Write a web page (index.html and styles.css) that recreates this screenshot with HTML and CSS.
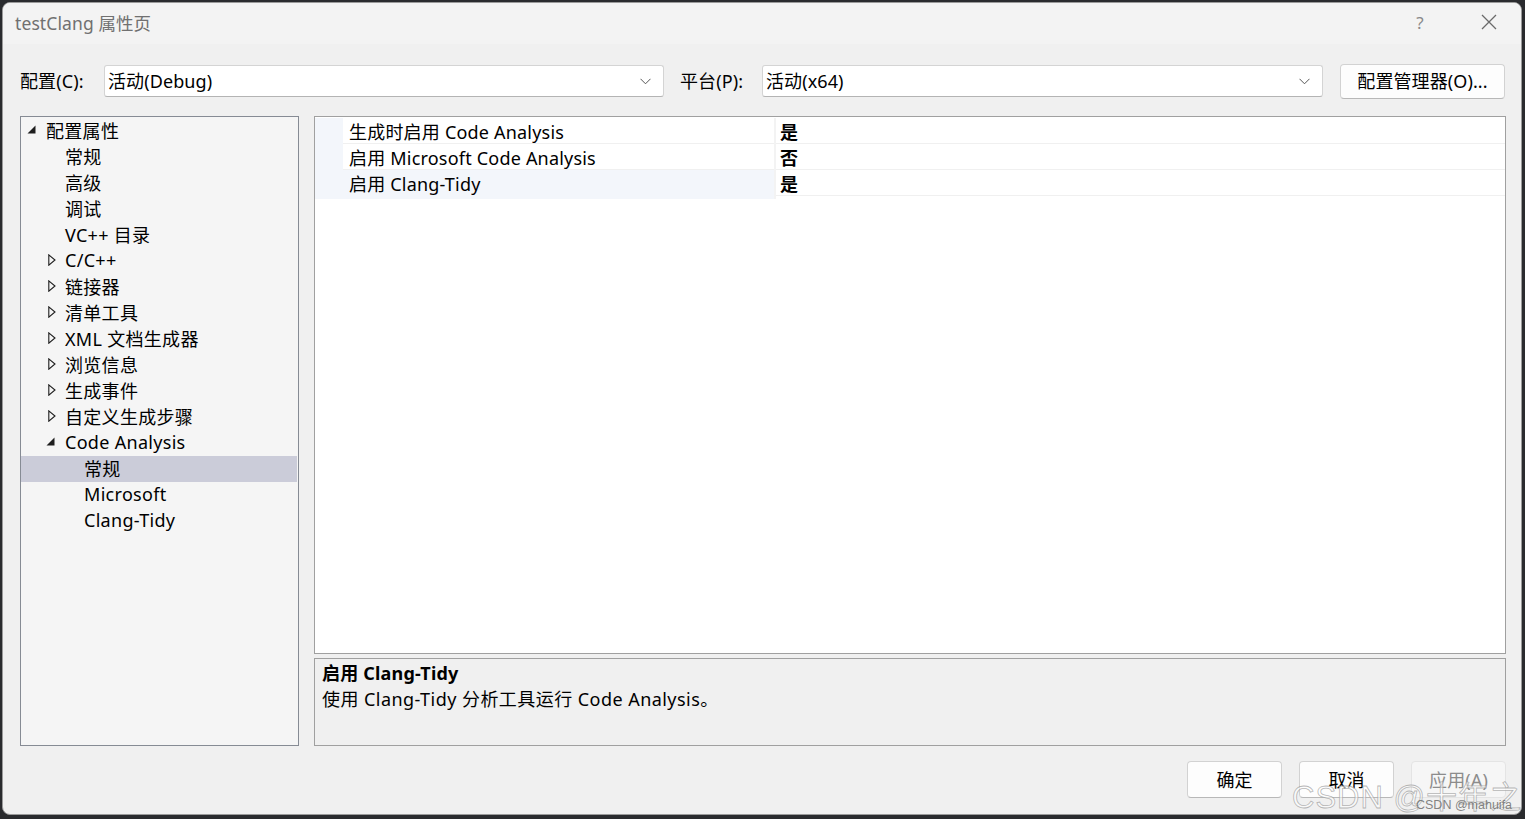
FILE: index.html
```html
<!DOCTYPE html>
<html lang="zh-CN">
<head>
<meta charset="utf-8">
<title>testClang 属性页</title>
<link rel="stylesheet" href="styles.css">
</head>
<body>
<div class="window">
  <div class="titlebar">
    <span class="title">testClang 属性页</span>
    <span class="help">?</span>
    <span class="close">
      <svg width="16" height="16" viewBox="0 0 16 16"><path d="M1 1 L15 15 M15 1 L1 15" stroke="#6a6a6a" stroke-width="1.3" fill="none"/></svg>
    </span>
  </div>

  <div class="content">
    <div class="toolbar">
      <span class="label label-config">配置(C):</span>
      <div class="combo combo-config">
        <span>活动(Debug)</span>
        <svg class="chev" width="11" height="7" viewBox="0 0 11 7"><path d="M0.5 0.8 L5.5 5.8 L10.5 0.8" stroke="#555" stroke-width="1" fill="none"/></svg>
      </div>
      <span class="label label-platform">平台(P):</span>
      <div class="combo combo-platform">
        <span>活动(x64)</span>
        <svg class="chev" width="11" height="7" viewBox="0 0 11 7"><path d="M0.5 0.8 L5.5 5.8 L10.5 0.8" stroke="#555" stroke-width="1" fill="none"/></svg>
      </div>
      <button class="btn btn-manager">配置管理器(O)...</button>
    </div>

    <div class="main">
      <div class="tree">
        <div class="node lvl0"><span class="tw tw-exp"><svg width="9" height="9" viewBox="0 0 9 9"><path d="M8.5 0.5 L8.5 8.5 L0.5 8.5 Z" fill="#1e1e1e"/></svg></span>配置属性</div>
        <div class="node lvl1"><span class="tw"></span>常规</div>
        <div class="node lvl1"><span class="tw"></span>高级</div>
        <div class="node lvl1"><span class="tw"></span>调试</div>
        <div class="node lvl1"><span class="tw"></span>VC++ 目录</div>
        <div class="node lvl1"><span class="tw"><svg width="8" height="12" viewBox="0 0 8 12"><path d="M0.8 0.8 L7 6 L0.8 11.2 Z" fill="none" stroke="#1e1e1e" stroke-width="1.1"/></svg></span>C/C++</div>
        <div class="node lvl1"><span class="tw"><svg width="8" height="12" viewBox="0 0 8 12"><path d="M0.8 0.8 L7 6 L0.8 11.2 Z" fill="none" stroke="#1e1e1e" stroke-width="1.1"/></svg></span>链接器</div>
        <div class="node lvl1"><span class="tw"><svg width="8" height="12" viewBox="0 0 8 12"><path d="M0.8 0.8 L7 6 L0.8 11.2 Z" fill="none" stroke="#1e1e1e" stroke-width="1.1"/></svg></span>清单工具</div>
        <div class="node lvl1"><span class="tw"><svg width="8" height="12" viewBox="0 0 8 12"><path d="M0.8 0.8 L7 6 L0.8 11.2 Z" fill="none" stroke="#1e1e1e" stroke-width="1.1"/></svg></span>XML 文档生成器</div>
        <div class="node lvl1"><span class="tw"><svg width="8" height="12" viewBox="0 0 8 12"><path d="M0.8 0.8 L7 6 L0.8 11.2 Z" fill="none" stroke="#1e1e1e" stroke-width="1.1"/></svg></span>浏览信息</div>
        <div class="node lvl1"><span class="tw"><svg width="8" height="12" viewBox="0 0 8 12"><path d="M0.8 0.8 L7 6 L0.8 11.2 Z" fill="none" stroke="#1e1e1e" stroke-width="1.1"/></svg></span>生成事件</div>
        <div class="node lvl1"><span class="tw"><svg width="8" height="12" viewBox="0 0 8 12"><path d="M0.8 0.8 L7 6 L0.8 11.2 Z" fill="none" stroke="#1e1e1e" stroke-width="1.1"/></svg></span>自定义生成步骤</div>
        <div class="node lvl1"><span class="tw tw-exp"><svg width="9" height="9" viewBox="0 0 9 9"><path d="M8.5 0.5 L8.5 8.5 L0.5 8.5 Z" fill="#1e1e1e"/></svg></span>Code Analysis</div>
        <div class="node lvl2 selected"><span class="tw"></span>常规</div>
        <div class="node lvl2"><span class="tw"></span>Microsoft</div>
        <div class="node lvl2"><span class="tw"></span>Clang-Tidy</div>
      </div>

      <div class="right">
        <div class="grid">
          <div class="prow">
            <div class="gutter"></div>
            <div class="pname">生成时启用 Code Analysis</div>
            <div class="pval">是</div>
          </div>
          <div class="prow">
            <div class="gutter"></div>
            <div class="pname">启用 Microsoft Code Analysis</div>
            <div class="pval">否</div>
          </div>
          <div class="prow active">
            <div class="gutter"></div>
            <div class="pname">启用 Clang-Tidy</div>
            <div class="pval">是</div>
          </div>
        </div>
        <div class="desc">
          <div class="desc-title">启用 Clang-Tidy</div>
          <div class="desc-text">使用 Clang-Tidy 分析工具运行 Code Analysis。</div>
        </div>
      </div>
    </div>

    <div class="footer">
      <button class="btn btn-foot">确定</button>
      <button class="btn btn-foot">取消</button>
      <button class="btn btn-foot disabled">应用(A)</button>
    </div>
  </div>

  <div class="wm-big">CSDN @十年之少</div>
  <div class="wm-small">CSDN @mahuifa</div>
</div>
</body>
</html>
```

FILE: styles.css
```css
* { box-sizing: border-box; }

html, body {
  margin: 0;
  padding: 0;
  width: 1525px;
  height: 819px;
  overflow: hidden;
}

body {
  background: #2a2b2e;
  font-family: "Noto Sans", "Noto Sans CJK SC", sans-serif;
  font-size: 18px;
  color: #000;
}

.window {
  position: relative;
  margin: 2px 0 0 2px;
  width: 1520px;
  height: 813px;
  background: #f0f0f0;
  border: 1px solid #9a9a9a;
  border-radius: 8px;
  overflow: hidden;
}

.titlebar {
  height: 41px;
  background: #f3f3f3;
  display: flex;
  align-items: center;
  padding-left: 12px;
  padding-bottom: 3px;
}

.title {
  font-size: 17.5px;
  color: #707070;
  flex: 1;
  letter-spacing: 0.1px;
}

.help {
  font-size: 17px;
  color: #8a8a8a;
  width: 20px;
  text-align: center;
  margin-right: 51px;
}

.close {
  width: 16px;
  height: 16px;
  margin-right: 24px;
  display: flex;
}

.content {
  padding: 20px 15px 0 17px;
}

.toolbar {
  display: flex;
  align-items: center;
  height: 34px;
}

.label {
  white-space: nowrap;
  flex: none;
  letter-spacing: 0.1px;
  padding-bottom: 2px;
}

.label-config { width: 84px; }
.label-platform { width: 82px; margin-left: 16px; }

.combo {
  height: 32px;
  flex: none;
  background: #fff;
  border: 1px solid #d4d4d4;
  border-bottom-color: #b4b4b4;
  border-radius: 3px;
  display: flex;
  align-items: center;
  justify-content: space-between;
  padding: 0 12px 2px 3px;
  letter-spacing: 0.1px;
}

.combo-config { width: 560px; }
.combo-platform { width: 561px; }

.chev { flex: none; margin-top: 2px; }

.btn {
  font-family: "Noto Sans", "Noto Sans CJK SC", sans-serif;
  font-size: 18px;
  color: #000;
  background: #fdfdfd;
  border: 1px solid #d2d2d2;
  border-bottom-color: #b8b8b8;
  border-radius: 4px;
  padding: 0 0 2px 0;
  letter-spacing: 0.1px;
}

.btn-manager {
  width: 165px;
  height: 35px;
  margin-left: 17px;
  flex: none;
}

.main {
  display: flex;
  gap: 15px;
  margin-top: 18px;
  height: 630px;
}

.tree {
  width: 279px;
  flex: none;
  background: #f5f5f5;
  border: 1px solid #868b94;
  padding-top: 1px;
  letter-spacing: 0.3px;
}

.node {
  height: 26px;
  display: flex;
  align-items: center;
  white-space: nowrap;
  padding-bottom: 2px;
}

.tw {
  width: 19px;
  height: 24px;
  flex: none;
  display: flex;
  align-items: center;
  justify-content: flex-start;
}

.tw-exp { padding-bottom: 1px; }

.lvl0 { padding-left: 6px; }
.lvl1 { padding-left: 25px; }
.lvl1 .tw { padding-left: 2px; }
.lvl1 .tw-exp { padding-left: 0; }
.lvl2 { padding-left: 44px; }

.node.selected {
  background: #cbccd9;
  margin-right: 1px;
}

.right {
  flex: 1;
  display: flex;
  flex-direction: column;
  gap: 4px;
}

.grid {
  height: 538px;
  background: #fff;
  border: 1px solid #a0a0a0;
  padding-top: 1px;
}

.prow {
  height: 26px;
  display: grid;
  grid-template-columns: 28px 433px 1fr;
  border-bottom: 1px solid #f0f0f0;
}

.gutter { background: #f3f6fb; }

.pname {
  padding-left: 6px;
  display: flex;
  align-items: center;
  border-right: 2px solid #f3f3f3;
  letter-spacing: 0.2px;
  padding-bottom: 3px;
}

.pval {
  padding-left: 4px;
  display: flex;
  align-items: center;
  font-weight: 700;
  padding-bottom: 3px;
}

.prow.active .pname { background: #f3f6fb; }

.desc {
  height: 88px;
  border: 1px solid #a0a0a0;
  background: #f0f0f0;
  padding: 1px 7px;
}

.desc-title {
  font-weight: 700;
  line-height: 26px;
  letter-spacing: 0.2px;
}

.desc-text {
  line-height: 26px;
  letter-spacing: 0.45px;
}

.footer {
  display: flex;
  justify-content: flex-end;
  gap: 17px;
  margin-top: 15px;
}

.btn-foot {
  width: 95px;
  height: 37px;
}

.btn-foot.disabled {
  color: #8c8c8c;
  background: #f6f6f6;
  border-color: #e4e4e4;
}

.wm-big {
  position: absolute;
  left: 1289px;
  top: 769px;
  font-family: "Liberation Sans", "Noto Sans CJK SC", sans-serif;
  font-size: 31px;
  color: rgba(255, 255, 255, 0.6);
  -webkit-text-stroke: 0.8px rgba(150, 150, 150, 0.7);
  letter-spacing: 1px;
  white-space: nowrap;
  pointer-events: none;
}

.wm-small {
  position: absolute;
  left: 1413px;
  top: 795px;
  font-family: "Liberation Sans", sans-serif;
  font-size: 12.5px;
  color: rgba(110, 110, 110, 0.85);
  white-space: nowrap;
  pointer-events: none;
}
```
